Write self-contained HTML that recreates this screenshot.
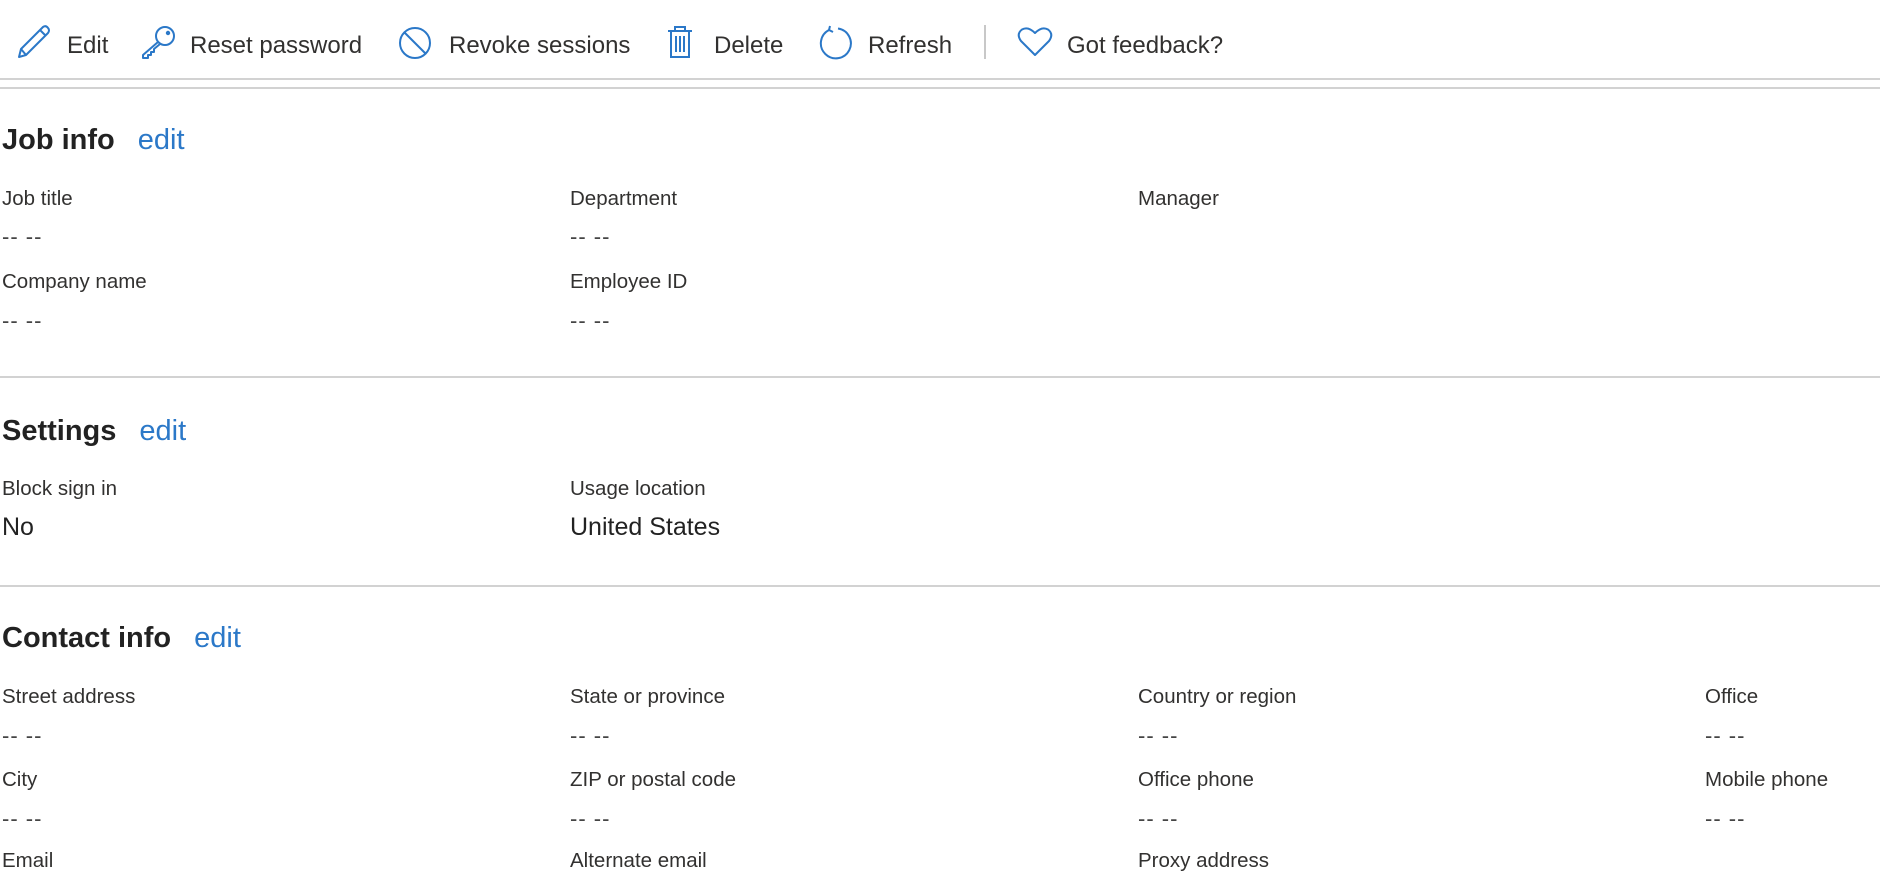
<!DOCTYPE html>
<html><head><meta charset="utf-8"><style>
body{margin:0;width:1880px;height:874px;background:#fff;position:relative;overflow:hidden;font-family:"Liberation Sans",sans-serif;color:#323130}
.a{position:absolute;white-space:nowrap}
.tb{font-size:24px;line-height:30px;top:31px;color:#323130}
.ic{position:absolute}
.hr{position:absolute;left:0;width:1880px;height:2px;background:#d2d2d2}
.h{font-size:29px;font-weight:bold;line-height:34px;color:#222}
.h span{color:#2b78c8;font-weight:normal;margin-left:23px}
.l{font-size:20.5px;line-height:24px;color:#323130}
.v{font-size:22px;line-height:24px;color:#444;letter-spacing:1px}
.vb{font-size:25px;line-height:28px;color:#222}
</style></head><body>
<svg class="ic" style="left:16px;top:24px" width="36" height="36" viewBox="0 0 36 36" fill="none" stroke="#2b78c8" stroke-width="2" stroke-linejoin="round"><path d="M3 33 L5 25 L27 3 Q30 1 32 4 Q34 6 32 9 L10 31 Z M5 25 L10 31 M24 6 L29 11"/></svg>
<div class="a tb" style="left:67px">Edit</div>
<svg class="ic" style="left:140px;top:24px" width="38" height="36" viewBox="0 0 38 36" fill="none" stroke="#2b78c8" stroke-width="2" stroke-linejoin="round"><circle cx="25" cy="12" r="9"/><circle cx="28" cy="9" r="1.2" fill="#2b78c8"/><path d="M18 18 L3 31 L3 34 L8 34 L8 31 L11 31 L11 28 L14 28 L14 25 L20 20"/></svg>
<div class="a tb" style="left:190px">Reset password</div>
<svg class="ic" style="left:398px;top:26px" width="34" height="34" viewBox="0 0 34 34" fill="none" stroke="#2b78c8" stroke-width="2"><circle cx="17" cy="17" r="15"/><path d="M6.5 6.5 L27.5 27.5"/></svg>
<div class="a tb" style="left:449px">Revoke sessions</div>
<svg class="ic" style="left:666px;top:25px" width="28" height="34" viewBox="0 0 28 34" fill="none" stroke="#2b78c8" stroke-width="2"><path d="M2 6 H26 M9 6 V2 H19 V6 M5 6 V32 H23 V6 M10 11 V27 M14 11 V27 M18 11 V27"/></svg>
<div class="a tb" style="left:714px">Delete</div>
<svg class="ic" style="left:817px;top:24px" width="36" height="36" viewBox="0 0 36 36" fill="none" stroke="#2b78c8" stroke-width="2"><path d="M12 6 A15 15 0 1 0 21 4.5"/><path d="M13 2 L12 6 L16 8"/></svg>
<div class="a tb" style="left:868px">Refresh</div>
<div class="a" style="left:984px;top:25px;width:2px;height:34px;background:#c8c8c8"></div>
<svg class="ic" style="left:1017px;top:26px" width="36" height="32" viewBox="0 0 36 32" fill="none" stroke="#2b78c8" stroke-width="2" stroke-linejoin="round"><path d="M18 29 L4 15 Q-1 8 5 3.5 Q11 0 18 7 Q25 0 31 3.5 Q37 8 32 15 Z"/></svg>
<div class="a tb" style="left:1067px">Got feedback?</div>
<div class="hr" style="top:78px"></div>
<div class="hr" style="top:87px"></div>

<div class="a h" style="left:2px;top:123px">Job info<span>edit</span></div>
<div class="a l" style="left:2px;top:187px">Job title</div>
<div class="a l" style="left:570px;top:187px">Department</div>
<div class="a l" style="left:1138px;top:187px">Manager</div>
<div class="a v" style="left:2px;top:225px">-- --</div>
<div class="a v" style="left:570px;top:225px">-- --</div>
<div class="a l" style="left:2px;top:270px">Company name</div>
<div class="a l" style="left:570px;top:270px">Employee ID</div>
<div class="a v" style="left:2px;top:309px">-- --</div>
<div class="a v" style="left:570px;top:309px">-- --</div>
<div class="hr" style="top:376px"></div>

<div class="a h" style="left:2px;top:414px">Settings<span>edit</span></div>
<div class="a l" style="left:2px;top:477px">Block sign in</div>
<div class="a l" style="left:570px;top:477px">Usage location</div>
<div class="a vb" style="left:2px;top:513px">No</div>
<div class="a vb" style="left:570px;top:513px">United States</div>
<div class="hr" style="top:585px"></div>

<div class="a h" style="left:2px;top:621px">Contact info<span>edit</span></div>
<div class="a l" style="left:2px;top:685px">Street address</div>
<div class="a l" style="left:570px;top:685px">State or province</div>
<div class="a l" style="left:1138px;top:685px">Country or region</div>
<div class="a l" style="left:1705px;top:685px">Office</div>
<div class="a v" style="left:2px;top:724px">-- --</div>
<div class="a v" style="left:570px;top:724px">-- --</div>
<div class="a v" style="left:1138px;top:724px">-- --</div>
<div class="a v" style="left:1705px;top:724px">-- --</div>
<div class="a l" style="left:2px;top:768px">City</div>
<div class="a l" style="left:570px;top:768px">ZIP or postal code</div>
<div class="a l" style="left:1138px;top:768px">Office phone</div>
<div class="a l" style="left:1705px;top:768px">Mobile phone</div>
<div class="a v" style="left:2px;top:807px">-- --</div>
<div class="a v" style="left:570px;top:807px">-- --</div>
<div class="a v" style="left:1138px;top:807px">-- --</div>
<div class="a v" style="left:1705px;top:807px">-- --</div>
<div class="a l" style="left:2px;top:849px">Email</div>
<div class="a l" style="left:570px;top:849px">Alternate email</div>
<div class="a l" style="left:1138px;top:849px">Proxy address</div>
</body></html>
